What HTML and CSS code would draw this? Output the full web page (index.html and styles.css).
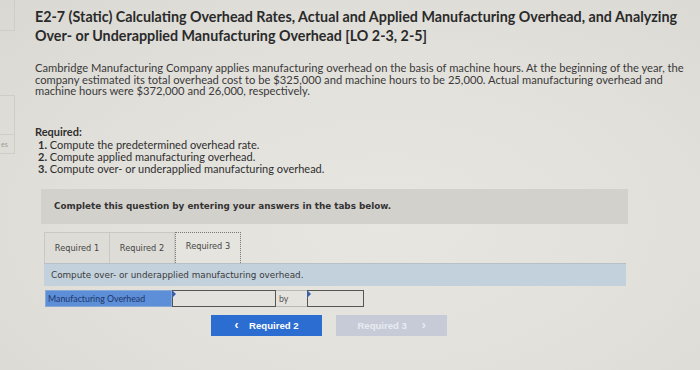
FILE: index.html
```html
<!DOCTYPE html>
<html>
<head>
<meta charset="utf-8">
<title>E2-7 Overhead</title>
<link rel="stylesheet" href="styles.css">
</head>
<body>
<div class="page">
    <aside class="side">
        <div class="side-box top"></div>
        <div class="side-box mid"></div>
        <div class="side-box low">es</div>
    </aside>
    <main class="question">
        <h1 class="title">E2-7 (Static) Calculating Overhead Rates, Actual and Applied Manufacturing Overhead, and Analyzing Over- or Underapplied Manufacturing Overhead [LO 2-3, 2-5]</h1>

        <p class="story">Cambridge Manufacturing Company applies manufacturing overhead on the basis of machine hours. At the beginning of the year, the company estimated its total overhead cost to be $325,000 and machine hours to be 25,000. Actual manufacturing overhead and machine hours were $372,000 and 26,000, respectively.</p>

        <div class="required">
            <b>Required:</b>
            <ol>
                <li><b>1.</b> Compute the predetermined overhead rate.</li>
                <li><b>2.</b> Compute applied manufacturing overhead.</li>
                <li><b>3.</b> Compute over- or underapplied manufacturing overhead.</li>
            </ol>
        </div>

        <div class="notice">Complete this question by entering your answers in the tabs below.</div>

        <div class="tabs">
            <div class="tab">Required 1</div>
            <div class="tab">Required 2</div>
            <div class="tab active">Required 3</div>
        </div>

        <div class="prompt">Compute over- or underapplied manufacturing overhead.</div>

        <div class="answer-row">
            <div class="label-cell">Manufacturing Overhead</div>
            <div class="input-cell wide"><span class="flag"></span></div>
            <div class="by-cell">by</div>
            <div class="input-cell narrow"><span class="flag"></span></div>
        </div>

        <div class="nav-buttons">
            <button class="nav prev"><span class="chev">&lsaquo;</span> Required 2</button>
            <button class="nav next">Required 3 <span class="chev after">&rsaquo;</span></button>
        </div>
    </main>
</div>
</body>
</html>
```

FILE: styles.css
```css
body {
    margin: 0;
    background: radial-gradient(ellipse at 55% 60%, #e8e6e1 0%, #e2e0db 55%, #d9d8d3 100%);
    color: #2f2f2f;
    font-family: Lato, "Open Sans", sans-serif;
    height: 370px;
    overflow: hidden;
}

.page {
    display: flex;
}

.side {
    width: 15px;
}

.side-box {
    border: 1px solid #cfcdc8;
    border-left: 0;
    font-size: 7px;
    color: #9a9a9a;
}

.side-box.top {
    height: 30px;
    border-top: 0;
}

.side-box.mid {
    height: 38px;
    margin-top: 64px;
}

.side-box.low {
    height: 18px;
    line-height: 18px;
    padding-left: 1px;
    border-top: 0;
}

.question {
    padding: 7px 0 0 20px;
    width: 660px;
}

.title {
    margin: 0;
    font-size: 14.3px;
    line-height: 19px;
    font-weight: 700;
    color: #2a2a2a;
}

.story {
    margin: 17px 0 0;
    width: 655px;
    font-size: 11.2px;
    line-height: 11.5px;
    color: #3a3a3a;
}

.required {
    margin-top: 29px;
    font-size: 11px;
    line-height: 12px;
    color: #2f2f2f;
}

.required ol {
    list-style: none;
    margin: 1px 0 0;
    padding-left: 3px;
}

.notice {
    margin: 14px 0 0 6px;
    width: 574px;
    height: 35px;
    padding-left: 13px;
    line-height: 35px;
    background: #d3d1cc;
    font-family: "DejaVu Sans", Verdana, sans-serif;
    font-weight: bold;
    font-size: 8.8px;
    color: #333;
}

.tabs {
    display: flex;
    margin: 8px 0 0 9px;
    height: 31px;
}

.tab {
    width: 64px;
    border: 1px solid #cac8c3;
    border-bottom: 0;
    background: #dedcd7;
    font-family: "DejaVu Sans", Verdana, sans-serif;
    font-size: 8.2px;
    color: #444;
    text-align: center;
    line-height: 31px;
}

.tab + .tab {
    border-left: 0;
}

.tab.active {
    background: #e6e4df;
    border: 1px dotted #777;
    border-bottom: 0;
    line-height: 27px;
}

.prompt {
    margin-left: 9px;
    width: 575px;
    height: 22px;
    padding-left: 7px;
    line-height: 22px;
    background: #c3d1dc;
    border-top: 1px solid #b7c0c6;
    font-family: "DejaVu Sans", Verdana, sans-serif;
    font-size: 8.8px;
    color: #3a3a3a;
}

.answer-row {
    display: flex;
    margin: 4px 0 0 10px;
    height: 17px;
}

.label-cell {
    width: 123px;
    background: #5c8fd8;
    border: 1px solid #8aa8d6;
    color: #20356a;
    font-size: 8.8px;
    line-height: 15px;
    padding-left: 2px;
}

.input-cell {
    position: relative;
    border: 1px solid #555;
    background: #e4e2dd;
}

.input-cell.wide {
    width: 102px;
}

.input-cell.narrow {
    width: 55px;
}

.flag {
    position: absolute;
    left: 0;
    top: 0;
    width: 0;
    height: 0;
    border-top: 3px solid transparent;
    border-bottom: 3px solid transparent;
    border-left: 3px solid #3a5fa8;
}

.flag::before {
    content: "";
    position: absolute;
    left: -4px;
    top: -3px;
    width: 1px;
    height: 7px;
    background: #3a5fa8;
}

.by-cell {
    width: 28px;
    border-top: 1px solid #b8b8b4;
    border-bottom: 1px solid #b8b8b4;
    padding-left: 3px;
    font-size: 8.8px;
    line-height: 15px;
    color: #555;
}

.nav-buttons {
    display: flex;
    gap: 14px;
    margin: 8px 0 0 176px;
}

.nav {
    width: 111px;
    height: 21px;
    border: 0;
    font-family: "Liberation Sans", Arial, sans-serif;
    font-weight: bold;
    font-size: 9.6px;
    color: #fff;
    padding: 0;
}

.chev {
    font-size: 12px;
    margin-right: 8px;
}

.chev.after {
    margin: 0 0 0 12px;
}

.nav.prev {
    background: #2b6dd1;
}

.nav.next {
    background: #c6cbd7;
    color: #e8ebf2;
}
```
